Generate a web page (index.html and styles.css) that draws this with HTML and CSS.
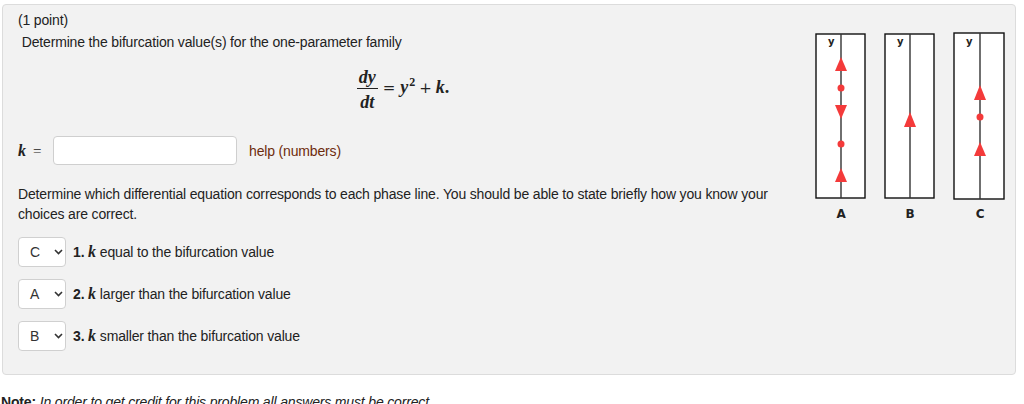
FILE: index.html
```html
<!DOCTYPE html>
<html>
<head>
<meta charset="utf-8">
<link rel="stylesheet" href="styles.css">
</head>
<body>
<div class="panel">
  <div class="main">
    <p class="point">(1 point)</p>
    <p class="intro">&nbsp;Determine the bifurcation value(s) for the one-parameter family</p>
    <div class="equation"><span class="frac"><span class="num">dy</span><span class="den">dt</span></span><span class="rel">=</span><i class="mv">y</i><sup class="sq">2</sup><span class="op">+</span><i class="mv">k</i><span class="dot">.</span></div>
    <div class="krow">
      <span class="klabel"><i class="v">k</i><span class="eq">=</span></span>
      <input class="answer" type="text">
      <span class="help">help (numbers)</span>
    </div>
    <p class="para">Determine which differential equation corresponds to each phase line. You should be able to state briefly how you know your choices are correct.</p>
    <div class="choices">
      <div class="choice">
        <div class="sel"><span class="selv">C</span><svg class="chev" width="9" height="6" viewBox="0 0 9 6"><path d="M1 1 L4.5 4.5 L8 1" fill="none" stroke="#333" stroke-width="1.6"/></svg></div>
        <span class="lab"><b>1.</b> <i class="v">k</i> equal to the bifurcation value</span>
      </div>
      <div class="choice">
        <div class="sel"><span class="selv">A</span><svg class="chev" width="9" height="6" viewBox="0 0 9 6"><path d="M1 1 L4.5 4.5 L8 1" fill="none" stroke="#333" stroke-width="1.6"/></svg></div>
        <span class="lab"><b>2.</b> <i class="v">k</i> larger than the bifurcation value</span>
      </div>
      <div class="choice">
        <div class="sel"><span class="selv">B</span><svg class="chev" width="9" height="6" viewBox="0 0 9 6"><path d="M1 1 L4.5 4.5 L8 1" fill="none" stroke="#333" stroke-width="1.6"/></svg></div>
        <span class="lab"><b>3.</b> <i class="v">k</i> smaller than the bifurcation value</span>
      </div>
    </div>
  </div>
  <svg class="figure" width="200" height="192" viewBox="0 0 200 192">
    <g fill="#fff" stroke="#111" stroke-width="1.4">
      <rect x="6" y="4" width="49" height="164"/>
      <rect x="75" y="4" width="49" height="164"/>
      <rect x="144" y="3" width="50" height="166"/>
    </g>
    <g stroke="#333" stroke-width="1.4">
      <line x1="31" y1="4" x2="31" y2="168"/>
      <line x1="100" y1="4" x2="100" y2="168"/>
      <line x1="170" y1="3" x2="170" y2="169"/>
    </g>
    <g font-family="'DejaVu Sans', sans-serif" font-weight="bold" font-size="10" fill="#222">
      <text x="18" y="15">y</text>
      <text x="87" y="15">y</text>
      <text x="156" y="15">y</text>
    </g>
    <g fill="#f43a3a">
      <polygon points="25,41 31,27 37,41"/>
      <circle cx="31" cy="58" r="3.5"/>
      <polygon points="25,75 37,75 31,89"/>
      <circle cx="31" cy="114" r="3.5"/>
      <polygon points="25,152 31,138 37,152"/>
      <polygon points="94,97 100,82 106,97"/>
      <polygon points="164,70 170,55 176,70"/>
      <circle cx="170" cy="87" r="3.5"/>
      <polygon points="164,126 170,112 176,126"/>
    </g>
    <g font-family="'DejaVu Sans', sans-serif" font-weight="bold" font-size="12" fill="#222" text-anchor="middle">
      <text x="31" y="188">A</text>
      <text x="100" y="188">B</text>
      <text x="170" y="188">C</text>
    </g>
  </svg>
</div>
<p class="note"><b>Note:</b> <i>In order to get credit for this problem all answers must be correct.</i></p>
</body>
</html>
```
FILE: styles.css
```css
html, body {
  margin: 0;
  padding: 0;
  background: #fff;
}
body {
  font-family: "Liberation Sans", Arial, sans-serif;
  font-size: 14px;
  line-height: 20px;
  letter-spacing: -0.16px;
  color: #222;
}
p {
  margin: 0;
}
.panel {
  box-sizing: border-box;
  width: 1014px;
  margin: 4px 0 0 2px;
  padding: 0 6px 23px 15px;
  background: #f2f2f2;
  border: 1px solid #dcdcdc;
  border-radius: 4px;
  display: flex;
  align-items: flex-start;
}
.main {
  width: 766px;
  flex: none;
}
.point {
  margin-top: 5px;
}
.intro {
  margin-top: 2px;
}
.v {
  font-family: "Liberation Serif", "Times New Roman", serif;
  font-style: italic;
  font-weight: bold;
  font-size: 16px;
  letter-spacing: 0;
}
.equation {
  margin-top: 10px;
  height: 50px;
  line-height: 50px;
  text-align: center;
  font-family: "Liberation Serif", "Times New Roman", serif;
  font-size: 18px;
  letter-spacing: 0;
  padding-left: 4px;
  white-space: nowrap;
}
.mv {
  font-style: italic;
  font-weight: bold;
}
.frac {
  display: inline-block;
  vertical-align: middle;
  text-align: center;
  font-style: italic;
  font-weight: bold;
  line-height: 18px;
  margin-right: 4px;
}
.num {
  display: block;
  padding: 2px 2px 2px;
  border-bottom: 1px solid #222;
}
.den {
  display: block;
  padding: 4px 2px 0;
}
.rel, .op {
  font-family: "DejaVu Serif", serif;
  font-size: 15px;
}
.rel {
  margin: 0 5px 0 1px;
}
.sq {
  font-size: 12px;
  font-weight: bold;
  vertical-align: 7px;
  line-height: 0;
  margin-left: 1px;
}
.op {
  margin: 0 4px 0 4px;
}
.dot {
  font-weight: bold;
}
.krow {
  margin-top: 24px;
  height: 29px;
  display: flex;
  align-items: center;
}
.klabel {
  display: flex;
  align-items: center;
  width: 35px;
}
.klabel .eq {
  font-family: "Liberation Serif", "Times New Roman", serif;
  font-size: 15px;
  margin-left: 7px;
}
.answer {
  box-sizing: border-box;
  width: 184px;
  height: 29px;
  margin: 0;
  border: 1px solid #cfcfcf;
  border-radius: 4px;
  background: #fff;
  padding: 0 6px;
  font-family: inherit;
  font-size: 14px;
}
.help {
  margin-left: 12px;
  color: #6e2c0d;
}
.para {
  margin-top: 19px;
}
.choices {
  margin-top: 13px;
  display: flex;
  flex-direction: column;
  gap: 12px;
}
.choice {
  display: flex;
  align-items: center;
  height: 30px;
}
.sel {
  box-sizing: border-box;
  width: 48px;
  height: 30px;
  background: #fff;
  border: 1px solid #d0d0d0;
  border-radius: 4px;
  display: flex;
  align-items: center;
  padding-left: 11px;
  flex: none;
}
.selv {
  font-size: 14px;
  color: #333;
  width: 24px;
}
.chev {
  display: block;
}
.lab {
  margin-left: 7px;
}
.lab .v {
  font-size: 16px;
}
.figure {
  display: block;
  margin: 25px 0 0 26px;
  flex: none;
}
.note {
  margin: 17px 0 0 1px;
}
.note i {
  font-style: italic;
}
```
